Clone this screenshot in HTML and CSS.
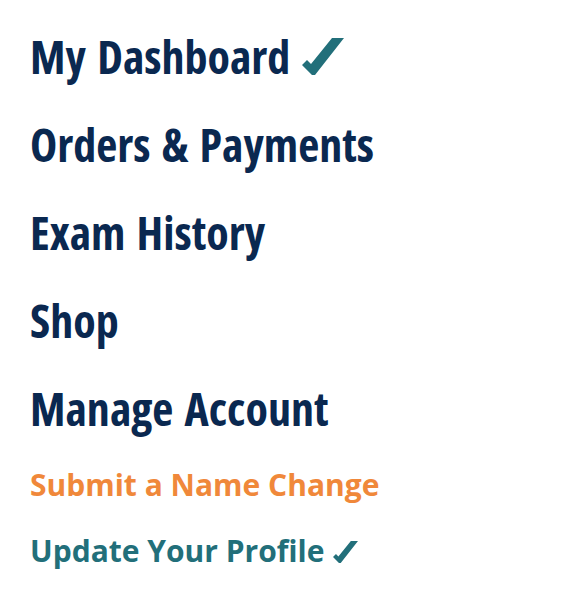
FILE: index.html
```html
<!DOCTYPE html>
<html lang="en">
<head>
<meta charset="utf-8">
<link rel="stylesheet" href="styles.css">
</head>
<body>
<nav class="menu">
  <a class="main" href="#">My Dashboard<svg class="check check-lg" viewBox="0 0 42 37" aria-hidden="true"><polygon points="30,0 42,0 13,37 10,37 0,27 5,22 9,26"/></svg></a>
  <a class="main" href="#">Orders &amp; Payments</a>
  <a class="main" href="#">Exam History</a>
  <a class="main" href="#">Shop</a>
  <a class="main" href="#">Manage Account</a>
  <a class="sub orange" href="#">Submit a Name Change</a>
  <a class="sub teal" href="#">Update Your Profile<svg class="check check-sm" viewBox="0 0 42 37" aria-hidden="true"><polygon points="30,0 42,0 13,37 10,37 0,27 5,22 9,26"/></svg></a>
</nav>
</body>
</html>
```
FILE: styles.css
```css
html, body { margin: 0; padding: 0; background: #fff; }
.menu {
  display: flex;
  flex-direction: column;
  padding: 12px 0 0 30px;
}
.menu a { text-decoration: none; display: block; white-space: nowrap; }
.main {
  font-family: "Open Sans", sans-serif;
  font-weight: 700;
  font-stretch: 75%;
  font-size: 46px;
  word-spacing: 3px;
  line-height: 88px;
  color: #0a2850;
  height: 88px;
}
.sub {
  font-family: "Open Sans", sans-serif;
  font-weight: 700;
  font-size: 30px;
  line-height: 66px;
}
.orange { color: #f0883a; }
.teal { color: #226f7a; }
.check { fill: #226f7a; vertical-align: -1px; }
.check-lg { width: 42px; height: 37px; margin-left: 12px; }
.check-sm { width: 25px; height: 22px; margin-left: 9px; }
```
